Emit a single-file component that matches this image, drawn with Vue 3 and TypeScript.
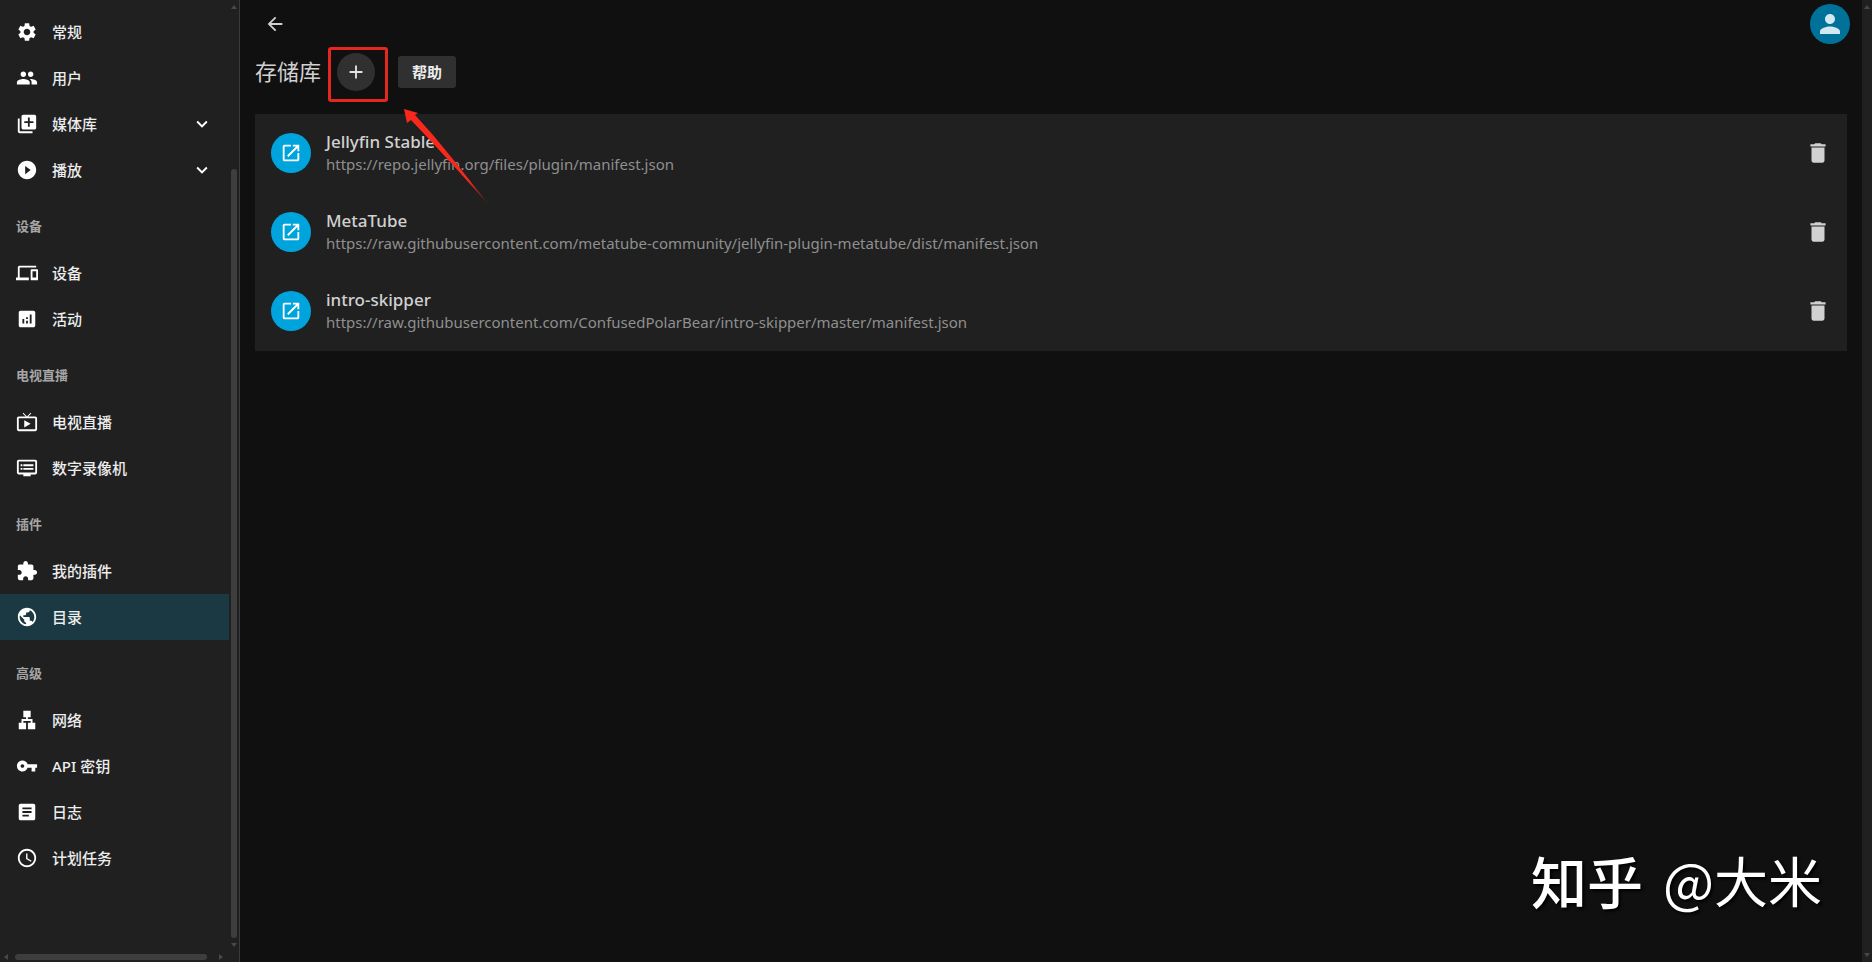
<script setup lang="ts">
interface NavItem {
  label: string
  icon: string
  expandable?: boolean
  active?: boolean
}

interface NavGroup {
  title?: string
  items: NavItem[]
}

interface Repository {
  name: string
  url: string
}

const icons: Record<string, string> = {
  settings:
    'M19.14 12.94c.04-.3.06-.61.06-.94 0-.32-.02-.64-.07-.94l2.03-1.58c.18-.14.23-.41.12-.61l-1.92-3.32c-.12-.22-.37-.29-.59-.22l-2.39.96c-.5-.38-1.03-.7-1.62-.94l-.36-2.54c-.04-.24-.24-.41-.48-.41h-3.84c-.24 0-.43.17-.47.41l-.36 2.54c-.59.24-1.13.57-1.62.94l-2.39-.96c-.22-.08-.47 0-.59.22L2.74 8.87c-.12.21-.08.47.12.61l2.03 1.58c-.05.3-.09.63-.09.94s.02.64.07.94l-2.03 1.58c-.18.14-.23.41-.12.61l1.92 3.32c.12.22.37.29.59.22l2.39-.96c.5.38 1.03.7 1.62.94l.36 2.54c.05.24.24.41.48.41h3.84c.24 0 .44-.17.47-.41l.36-2.54c.59-.24 1.13-.56 1.62-.94l2.39.96c.22.08.47 0 .59-.22l1.92-3.32c.12-.22.07-.47-.12-.61l-2.01-1.58zM12 15.6c-1.98 0-3.6-1.62-3.6-3.6s1.62-3.6 3.6-3.6 3.6 1.62 3.6 3.6-1.62 3.6-3.6 3.6z',
  people:
    'M16 11c1.66 0 2.99-1.34 2.99-3S17.66 5 16 5c-1.66 0-3 1.34-3 3s1.34 3 3 3zm-8 0c1.66 0 2.99-1.34 2.99-3S9.66 5 8 5C6.34 5 5 6.34 5 8s1.34 3 3 3zm0 2c-2.33 0-7 1.17-7 3.5V19h14v-2.5c0-2.33-4.67-3.5-7-3.5zm8 0c-.29 0-.62.02-.97.05 1.16.84 1.97 1.97 1.97 3.45V19h6v-2.5c0-2.33-4.67-3.5-7-3.5z',
  library:
    'M4 6H2v14c0 1.1.9 2 2 2h14v-2H4V6zm16-4H8c-1.1 0-2 .9-2 2v12c0 1.1.9 2 2 2h12c1.1 0 2-.9 2-2V4c0-1.1-.9-2-2-2zm-1 9h-4v4h-2v-4H9V9h4V5h2v4h4v2z',
  play: 'M12 2C6.48 2 2 6.48 2 12s4.48 10 10 10 10-4.48 10-10S17.52 2 12 2zm-2 14.5v-9l6 4.5-6 4.5z',
  devices:
    'M4 6h18V4H4c-1.1 0-2 .9-2 2v11H0v3h14v-3H4V6zm19 2h-6c-.55 0-1 .45-1 1v10c0 .55.45 1 1 1h6c.55 0 1-.45 1-1V9c0-.55-.45-1-1-1zm-1 9h-4v-7h4v7z',
  activity:
    'M19 3H5c-1.1 0-2 .9-2 2v14c0 1.1.9 2 2 2h14c1.1 0 2-.9 2-2V5c0-1.1-.9-2-2-2zM9 17H7v-5h2v5zm4 0h-2v-3h2v3zm0-5h-2v-2h2v2zm4 5h-2V7h2v10z',
  liveTv:
    'M21 6h-7.59l3.29-3.29L16 2l-4 4-4-4-.7.71L10.59 6H3c-1.1 0-2 .89-2 2v12c0 1.1.9 2 2 2h18c1.1 0 2-.9 2-2V8c0-1.11-.9-2-2-2zm0 14H3V8h18v12zM9 10v8l7-4z',
  dvr: 'M21 3H3c-1.1 0-2 .9-2 2v12c0 1.1.9 2 2 2h5v2h8v-2h5c1.1 0 1.99-.9 1.99-2L23 5c0-1.1-.9-2-2-2zm0 14H3V5h18v12zm-2-9H8v2h11V8zm0 4H8v2h11v-2zM7 8H5v2h2V8zm0 4H5v2h2v-2z',
  extension:
    'M20.5 11H19V7c0-1.1-.9-2-2-2h-4V3.5C13 2.12 11.88 1 10.5 1S8 2.12 8 3.5V5H4c-1.1 0-1.99.9-1.99 2v3.8H3.5c1.49 0 2.7 1.21 2.7 2.7s-1.21 2.7-2.7 2.7H2V20c0 1.1.9 2 2 2h3.8v-1.5c0-1.49 1.21-2.7 2.7-2.7 1.49 0 2.7 1.21 2.7 2.7V22H17c1.1 0 2-.9 2-2v-4h1.5c1.38 0 2.5-1.12 2.5-2.5S21.88 11 20.5 11z',
  globe:
    'M12 2C6.48 2 2 6.48 2 12s4.48 10 10 10 10-4.48 10-10S17.52 2 12 2zm-1 17.93c-3.95-.49-7-3.85-7-7.93 0-.62.08-1.21.21-1.79L9 15v1c0 1.1.9 2 2 2v1.93zm6.9-2.54c-.26-.81-1-1.39-1.9-1.39h-1v-3c0-.55-.45-1-1-1H8v-2h2c.55 0 1-.45 1-1V7h2c1.1 0 2-.9 2-2v-.41c2.93 1.19 5 4.06 5 7.41 0 2.08-.8 3.97-2.1 5.39z',
  network: 'M13 22h8v-7h-3v-4h-5V9h3V2H8v7h3v2H6v4H3v7h8v-7H8v-2h8v2h-3z',
  key: 'M12.65 10C11.83 7.67 9.61 6 7 6c-3.31 0-6 2.69-6 6s2.69 6 6 6c2.61 0 4.83-1.67 5.65-4H17v4h4v-4h2v-4H12.65zM7 14c-1.1 0-2-.9-2-2s.9-2 2-2 2 .9 2 2-.9 2-2 2z',
  log: 'M19 3H5c-1.1 0-2 .9-2 2v14c0 1.1.9 2 2 2h14c1.1 0 2-.9 2-2V5c0-1.1-.9-2-2-2zm-5 14H7v-2h7v2zm3-4H7v-2h10v2zm0-4H7V7h10v2z',
  schedule:
    'M11.99 2C6.47 2 2 6.48 2 12s4.47 10 9.99 10C17.52 22 22 17.52 22 12S17.52 2 11.99 2zM12 20c-4.42 0-8-3.58-8-8s3.58-8 8-8 8 3.58 8 8-3.58 8-8 8zm.5-13H11v6l5.25 3.15.75-1.23-4.5-2.67z',
}

const groups: NavGroup[] = [
  {
    items: [
      { label: '常规', icon: 'settings' },
      { label: '用户', icon: 'people' },
      { label: '媒体库', icon: 'library', expandable: true },
      { label: '播放', icon: 'play', expandable: true },
    ],
  },
  {
    title: '设备',
    items: [
      { label: '设备', icon: 'devices' },
      { label: '活动', icon: 'activity' },
    ],
  },
  {
    title: '电视直播',
    items: [
      { label: '电视直播', icon: 'liveTv' },
      { label: '数字录像机', icon: 'dvr' },
    ],
  },
  {
    title: '插件',
    items: [
      { label: '我的插件', icon: 'extension' },
      { label: '目录', icon: 'globe', active: true },
    ],
  },
  {
    title: '高级',
    items: [
      { label: '网络', icon: 'network' },
      { label: 'API 密钥', icon: 'key' },
      { label: '日志', icon: 'log' },
      { label: '计划任务', icon: 'schedule' },
    ],
  },
]

const repositories: Repository[] = [
  { name: 'Jellyfin Stable', url: 'https://repo.jellyfin.org/files/plugin/manifest.json' },
  {
    name: 'MetaTube',
    url: 'https://raw.githubusercontent.com/metatube-community/jellyfin-plugin-metatube/dist/manifest.json',
  },
  {
    name: 'intro-skipper',
    url: 'https://raw.githubusercontent.com/ConfusedPolarBear/intro-skipper/master/manifest.json',
  },
]
</script>

<template>
  <div class="app">
    <aside class="sidebar">
      <nav class="nav">
        <section v-for="(group, index) in groups" :key="index">
          <h2 v-if="group.title" class="nav-title">{{ group.title }}</h2>
          <component
            :is="item.expandable ? 'button' : 'a'"
            v-for="item in group.items"
            :key="item.label"
            class="nav-item"
            :class="{ active: item.active }"
            :href="item.expandable ? undefined : '#'"
            :type="item.expandable ? 'button' : undefined"
            :aria-expanded="item.expandable ? 'false' : undefined"
            :aria-current="item.active ? 'page' : undefined"
          >
            <svg class="icon" viewBox="0 0 24 24" aria-hidden="true"><path :d="icons[item.icon]" /></svg>
            <span class="nav-label">{{ item.label }}</span>
            <svg v-if="item.expandable" class="icon" viewBox="0 0 24 24" aria-hidden="true">
              <path d="M16.59 8.59 12 13.17 7.41 8.59 6 10l6 6 6-6z" />
            </svg>
          </component>
        </section>
      </nav>
      <div class="bar-y" aria-hidden="true">
        <svg class="cap" viewBox="0 0 6 4"><path d="M0 4 3 0l3 4z" /></svg>
        <div class="thumb-y"></div>
        <svg class="cap" viewBox="0 0 6 4"><path d="M0 0h6L3 4z" /></svg>
      </div>
      <div class="bar-x" aria-hidden="true">
        <svg class="cap-x" viewBox="0 0 4 6"><path d="M4 0v6L0 3z" /></svg>
        <div class="thumb-x"></div>
        <svg class="cap-x" viewBox="0 0 4 6"><path d="M0 0v6l4-3z" /></svg>
      </div>
    </aside>

    <main class="main">
      <header class="topbar">
        <button class="plain back" type="button" aria-label="返回">
          <svg class="icon" viewBox="0 0 24 24"><path d="M20 11H7.83l5.59-5.59L12 4l-8 8 8 8 1.41-1.41L7.83 13H20v-2z" /></svg>
        </button>
        <button class="plain avatar" type="button" aria-label="用户菜单">
          <svg viewBox="0 0 24 24"><path d="M12 12c2.21 0 4-1.79 4-4s-1.79-4-4-4-4 1.79-4 4 1.79 4 4 4zm0 2c-2.67 0-8 1.34-8 4v2h16v-2c0-2.66-5.33-4-8-4z" /></svg>
        </button>
      </header>

      <div class="heading">
        <h1>存储库</h1>
        <div class="add-wrap">
          <button class="plain add" type="button" aria-label="添加">
            <svg class="icon" viewBox="0 0 24 24"><path d="M19 13h-6v6h-2v-6H5v-2h6V5h2v6h6v2z" /></svg>
          </button>
          <div class="highlight"></div>
          <svg class="arrow" viewBox="0 0 88 100" aria-hidden="true">
            <defs>
              <linearGradient id="arrow-fade" x1="0" y1="0" x2="1" y2="1">
                <stop offset="0.75" stop-color="#f8281c" />
                <stop offset="1" stop-color="#f8281c" stop-opacity="0.2" />
              </linearGradient>
            </defs>
            <path d="M0 0 14 4 11 6 29 26 52 54 85 96 48 55 25 30 7 11 3 14z" fill="url(#arrow-fade)" />
          </svg>
        </div>
        <a class="help" href="#">帮助</a>
      </div>

      <ul class="repos">
        <li v-for="repo in repositories" :key="repo.name" class="repo">
          <a class="open" :href="repo.url" :aria-label="repo.name">
            <svg class="icon" viewBox="0 0 24 24"><path d="M19 19H5V5h7V3H5c-1.11 0-2 .9-2 2v14c0 1.1.89 2 2 2h14c1.1 0 2-.9 2-2v-7h-2v7zM14 3v2h3.59l-9.83 9.83 1.41 1.41L19 6.41V10h2V3h-7z" /></svg>
          </a>
          <div class="repo-body">
            <h3>{{ repo.name }}</h3>
            <p>{{ repo.url }}</p>
          </div>
          <button class="plain delete" type="button" aria-label="删除">
            <svg viewBox="0 0 24 24"><path d="M6 19c0 1.1.9 2 2 2h8c1.1 0 2-.9 2-2V7H6v12zM19 4h-3.5l-1-1h-5l-1 1H5v2h14V4z" /></svg>
          </button>
        </li>
      </ul>

      <div class="watermark"><b>知乎</b><span>@大米</span></div>
    </main>

    <div class="page-bar" aria-hidden="true">
      <svg class="cap" viewBox="0 0 6 4"><path d="M0 4 3 0l3 4z" /></svg>
      <svg class="cap" viewBox="0 0 6 4"><path d="M0 0h6L3 4z" /></svg>
    </div>
  </div>
</template>

<style>
body {
  margin: 0;
  background: #101010;
}
</style>

<style scoped>
.app {
  display: grid;
  grid-template-columns: 240px minmax(0, 1fr) 10px;
  height: 100vh;
  overflow: hidden;
  background: #101010;
  color: #d1d1d1;
  font-family: 'Noto Sans', 'Noto Sans CJK SC', sans-serif;
  font-size: 15px;
}

.app * {
  box-sizing: border-box;
}

svg {
  display: block;
  flex: none;
  fill: currentColor;
}

.icon {
  width: 22px;
  height: 22px;
}

.plain {
  display: flex;
  align-items: center;
  justify-content: center;
  padding: 0;
  border: 0;
  background: none;
  color: inherit;
  cursor: pointer;
}

.sidebar {
  display: grid;
  grid-template-columns: minmax(0, 1fr) 10px;
  grid-template-rows: minmax(0, 1fr) 10px;
  border-right: 1px solid #3a3a3a;
  background: #202020;
}

.nav {
  overflow: hidden;
  padding-top: 9px;
}

.nav-title {
  height: 57px;
  margin: 0;
  padding: 0 16px;
  color: #a6a6a6;
  font-size: 13px;
  font-weight: 700;
  line-height: 66px;
}

.nav-item {
  display: flex;
  align-items: center;
  gap: 14px;
  width: 100%;
  height: 46px;
  padding: 0 16px;
  border: 0;
  background: none;
  color: #fff;
  font: inherit;
  font-weight: 500;
  line-height: 22px;
  text-align: left;
  text-decoration: none;
  cursor: pointer;
}

.nav-item.active {
  background: #1b3943;
}

.nav-label {
  flex: 1;
  color: #ededed;
}

.bar-y,
.page-bar {
  display: flex;
  flex-direction: column;
  align-items: center;
  justify-content: space-between;
  padding: 5px 0;
  color: #484848;
}

.thumb-y {
  flex: 1;
  width: 6px;
  margin: 160px 0 5px;
  border-radius: 3px;
  background: #3e3e3e;
}

.cap {
  width: 6px;
  height: 4px;
}

.bar-x {
  display: flex;
  align-items: center;
  gap: 7px;
  padding: 0 6px 0 4px;
  color: #484848;
}

.thumb-x {
  flex: 1;
  height: 6px;
  margin-right: 5px;
  border-radius: 3px;
  background: #3e3e3e;
}

.cap-x {
  width: 4px;
  height: 6px;
}

.page-bar {
  background: #202020;
}

.main {
  position: relative;
  padding: 0 15px;
}

.topbar {
  display: flex;
  align-items: center;
  justify-content: space-between;
  height: 48px;
}

.back {
  width: 40px;
  height: 40px;
}

.avatar {
  width: 40px;
  height: 40px;
  margin-right: -3px;
  border-radius: 50%;
  background: #00729a;
  color: #d3e8f0;
}

.avatar svg {
  width: 30px;
  height: 30px;
}

.heading {
  display: flex;
  align-items: center;
  height: 48px;
  margin-bottom: 18px;
}

h1 {
  margin: 0;
  padding-bottom: 2px;
  font-size: 22px;
  font-weight: 400;
  line-height: 32px;
}

.add-wrap {
  position: relative;
  margin: 0 23px 0 16px;
}

.add {
  width: 38px;
  height: 38px;
  border-radius: 50%;
  background: #303030;
  color: #e4e4e4;
}

.highlight {
  position: absolute;
  top: -6px;
  left: -9px;
  width: 60px;
  height: 55px;
  border: 3px solid #e5281f;
  border-radius: 3px;
  pointer-events: none;
}

.arrow {
  position: absolute;
  z-index: 1;
  top: 56px;
  left: 67px;
  width: 88px;
  height: 100px;
  pointer-events: none;
}

.help {
  padding: 5px 14px;
  border-radius: 3px;
  background: #303030;
  color: #ededed;
  font-weight: 700;
  line-height: 22px;
  text-decoration: none;
}

.repos {
  margin: 0;
  padding: 0;
  background: #202020;
  list-style: none;
}

.repo {
  display: flex;
  align-items: center;
  gap: 15px;
  height: 79px;
  padding: 0 16px 2px;
}

.open {
  display: flex;
  align-items: center;
  justify-content: center;
  width: 40px;
  height: 40px;
  border-radius: 50%;
  background: #00a4dc;
  color: #fff;
}

.repo-body {
  flex: 1;
  min-width: 0;
}

.repo h3,
.repo p {
  margin: 0;
  font-weight: 400;
  line-height: 22px;
}

.repo h3 {
  font-size: 17px;
  font-weight: 500;
}

.repo p {
  color: #8f8f8f;
  font-size: 15px;
}

.delete svg {
  width: 26px;
  height: 26px;
}

.watermark {
  position: absolute;
  right: 40px;
  bottom: 42px;
  display: flex;
  gap: 20px;
  color: #fff;
  font-family: 'Noto Sans CJK SC', sans-serif;
  font-size: 54px;
  line-height: 80px;
  text-shadow: 2px 2px 3px #000;
}

.watermark b {
  font-size: 56px;
  font-weight: 500;
}
</style>
